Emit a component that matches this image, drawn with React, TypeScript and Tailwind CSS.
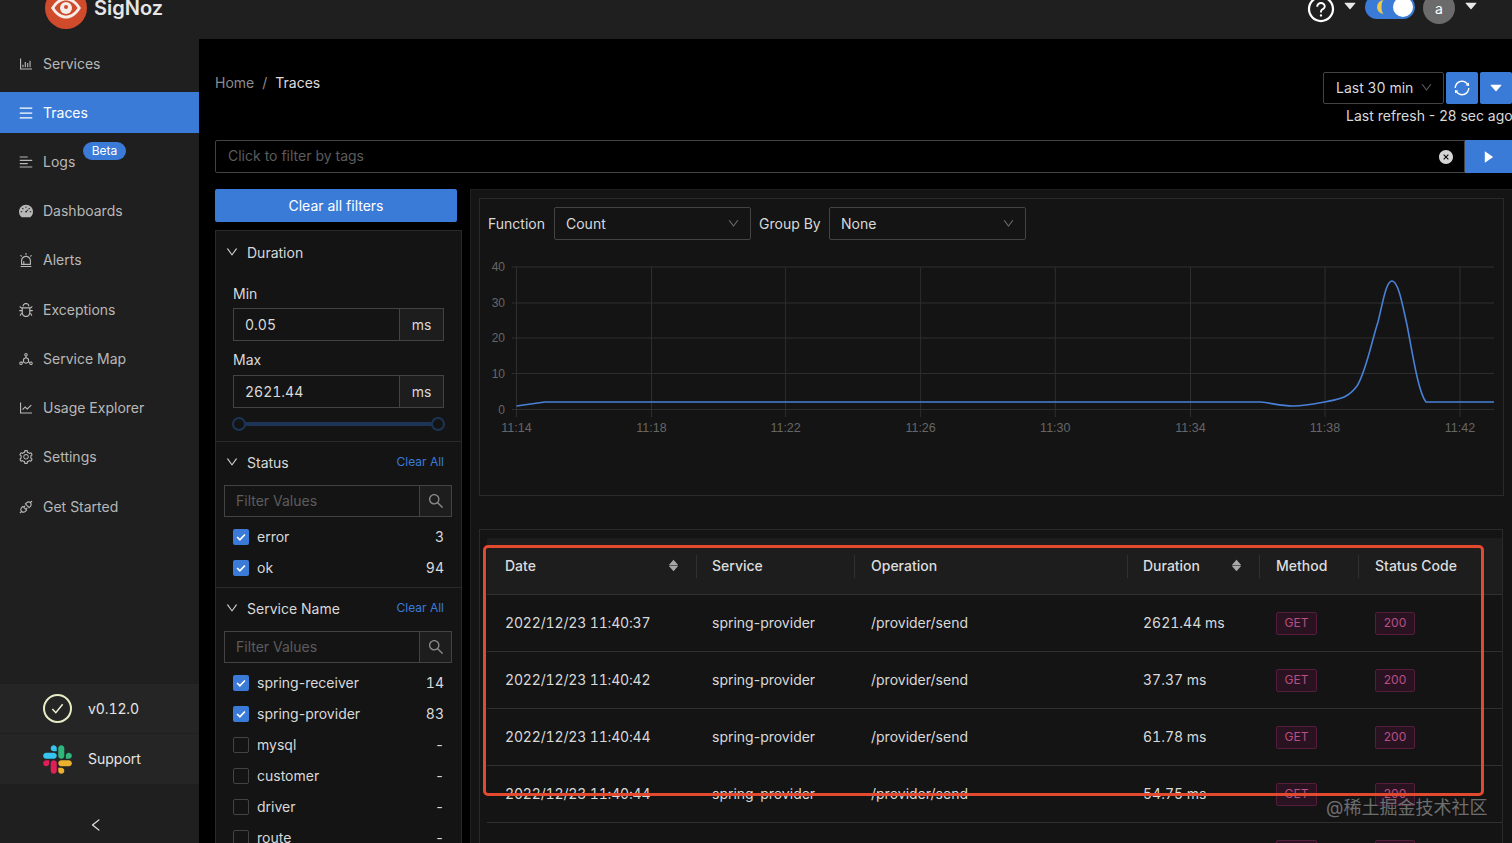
import React from "react";
import {
  AiOutlineBarChart, AiOutlineMenu, AiOutlineAlignLeft, AiFillDashboard, AiOutlineAlert, AiOutlineBug,
  AiOutlineDeploymentUnit, AiOutlineLineChart, AiOutlineSetting, AiOutlineApi, AiOutlineSearch,
  AiFillCloseCircle, AiFillCaretDown, AiFillCaretUp, AiOutlineSync, AiOutlineDown, AiOutlineLeft, AiOutlineQuestionCircle,
} from "react-icons/ai";

const nav = [
  { label: "Services", Icon: AiOutlineBarChart, y: 4 },
  { label: "Traces", Icon: AiOutlineMenu, y: 53, active: true },
  { label: "Logs", Icon: AiOutlineAlignLeft, y: 102 },
  { label: "Dashboards", Icon: AiFillDashboard, y: 151 },
  { label: "Alerts", Icon: AiOutlineAlert, y: 200 },
  { label: "Exceptions", Icon: AiOutlineBug, y: 250 },
  { label: "Service Map", Icon: AiOutlineDeploymentUnit, y: 299 },
  { label: "Usage Explorer", Icon: AiOutlineLineChart, y: 348 },
  { label: "Settings", Icon: AiOutlineSetting, y: 397 },
  { label: "Get Started", Icon: AiOutlineApi, y: 447 },
];

function Slack() {
  return (
    <svg viewBox="0 0 127 127" className="w-[29px] h-[29px]">
      <path d="M27.2 80c0 7.3-5.9 13.2-13.2 13.2C6.7 93.2.8 87.3.8 80c0-7.3 5.9-13.2 13.2-13.2h13.2V80zm6.6 0c0-7.3 5.9-13.2 13.2-13.2 7.3 0 13.2 5.9 13.2 13.2v33c0 7.3-5.9 13.2-13.2 13.2-7.3 0-13.2-5.9-13.2-13.2V80z" fill="#E01E5A" />
      <path d="M47 27c-7.3 0-13.2-5.9-13.2-13.2C33.8 6.5 39.7.6 47 .6c7.3 0 13.2 5.9 13.2 13.2V27H47zm0 6.7c7.3 0 13.2 5.9 13.2 13.2 0 7.3-5.9 13.2-13.2 13.2H13.9C6.6 60.1.7 54.2.7 46.9c0-7.3 5.9-13.2 13.2-13.2H47z" fill="#36C5F0" />
      <path d="M99.9 46.9c0-7.3 5.9-13.2 13.2-13.2 7.3 0 13.2 5.9 13.2 13.2 0 7.3-5.9 13.2-13.2 13.2H99.9V46.9zm-6.6 0c0 7.3-5.9 13.2-13.2 13.2-7.3 0-13.2-5.9-13.2-13.2V13.8C66.9 6.5 72.8.6 80.1.6c7.3 0 13.2 5.9 13.2 13.2v33.1z" fill="#2EB67D" />
      <path d="M80.1 99.8c7.3 0 13.2 5.9 13.2 13.2 0 7.3-5.9 13.2-13.2 13.2-7.3 0-13.2-5.9-13.2-13.2V99.8h13.2zm0-6.6c-7.3 0-13.2-5.9-13.2-13.2 0-7.3 5.9-13.2 13.2-13.2h33.1c7.3 0 13.2 5.9 13.2 13.2 0 7.3-5.9 13.2-13.2 13.2H80.1z" fill="#ECB22E" />
    </svg>
  );
}

function Logo() {
  return (
    <svg viewBox="0 0 42 42" className="w-[42px] h-[42px]">
      <circle cx="21" cy="21" r="21" fill="#cf4b2c" />
      <path d="M6 21 C11 13 16 10.5 21 10.5 C26 10.5 31 13 36 21 C31 29 26 31.5 21 31.5 C16 31.5 11 29 6 21Z" fill="#f6ece8" />
      <path d="M9.5 21 C13 15.5 17 13.5 21 13.5 C25 13.5 29 15.5 32.5 21 C29 26.5 25 28.5 21 28.5 C17 28.5 13 26.5 9.5 21Z" fill="#cf4b2c" />
      <circle cx="21" cy="21" r="6" fill="#f6ece8" />
      <circle cx="21" cy="20" r="2" fill="#cf4b2c" />
    </svg>
  );
}

function Sidebar() {
  return (
    <aside className="absolute left-0 top-[39px] bottom-0 w-[199px] bg-[#1f1f1f]">
      {nav.map(({ label, Icon, y, active }) => (
        <div
          key={label}
          style={{ top: y }}
          className={`absolute left-0 w-[199px] h-[41px] flex items-center pl-[18px] ${active ? "bg-[#3a7bd8] text-white" : "text-[#b8b8b8]"}`}
        >
          <Icon className="w-[16px] h-[16px]" />
          <span className="ml-[9px] text-[14px]">{label}</span>
        </div>
      ))}
      <div className="absolute left-[83px] top-[103px] h-[18px] w-[43px] rounded-full bg-[#3a7bd8] text-white text-[12px] flex items-center justify-center">Beta</div>
      <div className="absolute left-0 top-[645px] w-[199px] h-[50px] bg-[#252525] flex items-center pl-[43px] border-b border-[#1f1f1f]">
        <span className="w-[29px] h-[29px] rounded-full border-2 border-[#e5edc6] flex items-center justify-center">
          <svg viewBox="0 0 16 16" className="w-[15px] h-[15px]" fill="none" stroke="#eef2d8" strokeWidth="1.6"><path d="M2.5 8.5 L6.2 12.5 L13.5 3.5" /></svg>
        </span>
        <span className="ml-[16px] text-[14px] text-[#e6e6e6] tabular-nums tracking-[-0.1px]">v0.12.0</span>
      </div>
      <div className="absolute left-0 top-[695px] w-[199px] h-[50px] bg-[#252525] flex items-center pl-[43px]">
        <Slack />
        <span className="ml-[16px] pb-[2px] text-[14px] text-[#e6e6e6]">Support</span>
      </div>
      <AiOutlineLeft className="absolute left-[88px] top-[778px] w-[16px] h-[16px] text-[#d8d8d8]" />
    </aside>
  );
}

function Header() {
  return (
    <header className="absolute left-0 top-0 w-[1512px] h-[39px] bg-[#1f1f1f] overflow-hidden">
      <div className="absolute left-[45px] top-[-13px]"><Logo /></div>
      <div className="absolute left-[94px] top-[-6px] text-[20px] font-semibold text-[#e6e6e6] leading-[28px]">SigNoz</div>
      <AiOutlineQuestionCircle className="absolute left-[1306px] top-[-6px] w-[30px] h-[30px] text-white" />
      <AiFillCaretDown className="absolute left-[1342px] top-[-2px] w-[16px] h-[16px] text-[#e8e8e8]" />
      <div className="absolute left-[1365px] top-[-5px] w-[50px] h-[24px] rounded-full bg-[#3a7bd8]">
        <svg viewBox="0 0 16 16" className="absolute left-[8px] top-[4px] w-[16px] h-[16px]"><path d="M11 1 A7 7 0 1 0 11 15 A2.5 7 0 0 1 11 1Z" fill="#ecc94b" /></svg>
        <span className="absolute left-[28px] top-[2px] w-[20px] h-[20px] rounded-full bg-white" />
      </div>
      <div className="absolute left-[1423px] top-[-8px] w-[32px] h-[32px] rounded-full bg-[#6b6b6b] flex items-center justify-center text-white text-[14px]">a</div>
      <AiFillCaretDown className="absolute left-[1463px] top-[-2px] w-[16px] h-[16px] text-[#e8e8e8]" />
    </header>
  );
}

function Check({ on }: { on?: boolean }) {
  return (
    <span className={`w-[16px] h-[16px] rounded-[2px] flex items-center justify-center shrink-0 ${on ? "bg-[#3a7bd8]" : "border border-[#434343]"}`}>
      {on && (
        <svg viewBox="0 0 16 16" className="w-[12px] h-[12px]" fill="none" stroke="white" strokeWidth="2.2"><path d="M2.8 8 L6.5 11.8 L13.2 4.6" /></svg>
      )}
    </span>
  );
}

function FilterHead({ title, clear }: { title: string; clear?: boolean }) {
  return (
    <div className="h-[40px] flex items-center pl-[9px] pr-[17px]">
      <AiOutlineDown className="w-[14px] h-[14px] text-[#d0d0d0]" />
      <span className="ml-[8px] text-[14px] text-[#d9d9d9]">{title}</span>
      {clear && <span className="ml-auto text-[12px] text-[#3a7bd8]">Clear All</span>}
    </div>
  );
}

function FilterInput() {
  return (
    <div className="mt-[3px] ml-[8px] w-[228px] h-[32px] flex border border-[#434343]">
      <div className="flex-1 flex items-center pl-[11px] pb-[2px] text-[14px] text-[#5c5c5c]">Filter Values</div>
      <div className="w-[32px] border-l border-[#434343] bg-[#1d1d1d] flex items-center justify-center">
        <AiOutlineSearch className="w-[18px] h-[18px] text-[#8a8a8a]" />
      </div>
    </div>
  );
}

function CheckRow({ label, count, on }: { label: string; count: string; on?: boolean }) {
  return (
    <div className="h-[31px] flex items-center pl-[17px] pr-[17px] text-[14px] text-[#d9d9d9]">
      <Check on={on} />
      <span className="ml-[8px]">{label}</span>
      <span className="ml-auto tabular-nums">{count}</span>
    </div>
  );
}

function MsInput({ value }: { value: string }) {
  return (
    <div className="ml-[17px] w-[211px] h-[33px] flex border border-[#434343]">
      <div className="flex-1 flex items-center pl-[11px] text-[14px] text-[#d9d9d9] tabular-nums">{value}</div>
      <div className="w-[44px] border-l border-[#434343] bg-[#1d1d1d] flex items-center justify-center text-[14px] text-[#d9d9d9]">ms</div>
    </div>
  );
}

function Filters() {
  return (
    <div className="absolute left-[215px] top-[230px] w-[247px] h-[640px] bg-[#141414] border border-[#2a2a2a]">
      <div className="h-[211px] border-b border-[#2a2a2a] relative">
        <div className="h-[42px] flex items-center pl-[9px]">
          <AiOutlineDown className="w-[14px] h-[14px] text-[#d0d0d0]" />
          <span className="ml-[8px] text-[14px] text-[#d9d9d9]">Duration</span>
        </div>
        <div className="mt-[10px] ml-[17px] h-[20px] flex items-center text-[14px] text-[#d9d9d9]">Min</div>
        <div className="mt-[5px]"><MsInput value="0.05" /></div>
        <div className="mt-[8px] ml-[17px] h-[20px] flex items-center text-[14px] text-[#d9d9d9]">Max</div>
        <div className="mt-[6px]"><MsInput value="2621.44" /></div>
        <div className="absolute left-[23px] top-[191px] w-[199px] h-[4px] rounded-full bg-[#1c3456]" />
        <div className="absolute left-[16px] top-[186px] w-[14px] h-[14px] rounded-full border-2 border-[#1c3456] bg-[#141414]" />
        <div className="absolute left-[215px] top-[186px] w-[14px] h-[14px] rounded-full border-2 border-[#1c3456] bg-[#141414]" />
      </div>
      <div className="h-[146px] border-b border-[#2a2a2a]">
        <FilterHead title="Status" clear />
        <FilterInput />
        <div className="mt-[4px]">
          <CheckRow label="error" count="3" on />
          <CheckRow label="ok" count="94" on />
        </div>
      </div>
      <div>
        <FilterHead title="Service Name" clear />
        <FilterInput />
        <div className="mt-[4px]">
          <CheckRow label="spring-receiver" count="14" on />
          <CheckRow label="spring-provider" count="83" on />
          <CheckRow label="mysql" count="-" />
          <CheckRow label="customer" count="-" />
          <CheckRow label="driver" count="-" />
          <CheckRow label="route" count="-" />
        </div>
      </div>
    </div>
  );
}

function Select({ value }: { value: string }) {
  return (
    <div className="w-[197px] h-[33px] border border-[#434343] rounded-[2px] flex items-center pl-[11px] pr-[10px] text-[14px] text-[#d9d9d9]">
      {value}
      <AiOutlineDown className="ml-auto w-[13px] h-[13px] text-[#6a6a6a]" />
    </div>
  );
}

const xTicks: [string, number][] = [["11:14", 516.5], ["11:18", 651.5], ["11:22", 785.6], ["11:26", 920.6], ["11:30", 1055.3], ["11:34", 1190.5], ["11:38", 1325], ["11:42", 1460]];
const yTicks: [string, number][] = [["40", 267], ["30", 303], ["20", 338], ["10", 373.5], ["0", 409.5]];

function Chart() {
  return (
    <svg className="absolute left-[480px] top-[250px]" width="1022" height="190" viewBox="480 250 1022 190" fontFamily="'Liberation Sans', sans-serif">
      {yTicks.map(([l, y]) => (
        <g key={l}>
          <line x1="512" x2="1494" y1={y} y2={y} stroke="#2e2e2e" />
          <text x="505" y={y + 4} textAnchor="end" fontSize="12" fill="#666">{l}</text>
        </g>
      ))}
      {xTicks.map(([l, x]) => (
        <g key={l}>
          <line x1={x} x2={x} y1="267" y2="417" stroke="#2e2e2e" />
          <text x={x} y="431.5" textAnchor="middle" fontSize="12.5" fill="#666">{l}</text>
        </g>
      ))}
      <path
        d="M516.5 406 L545 402 L1260 402 C1272 403 1280 406 1293 406 C1306 406 1314 404 1327 401.5 C1340 399 1348 398 1357 386 C1366 372 1372 340 1378 322 C1383 302 1386 281 1392 281 C1398 281 1402 302 1407 325 C1412 350 1418 392 1426 402 L1494 402"
        fill="none"
        stroke="#4a80d8"
        strokeWidth="1.6"
      />
    </svg>
  );
}

const rows = [
  ["2022/12/23 11:40:37", "spring-provider", "/provider/send", "2621.44 ms"],
  ["2022/12/23 11:40:42", "spring-provider", "/provider/send", "37.37 ms"],
  ["2022/12/23 11:40:44", "spring-provider", "/provider/send", "61.78 ms"],
  ["2022/12/23 11:40:44", "spring-provider", "/provider/send", "54.75 ms"],
];

function Tag({ t, w }: { t: string; w: string }) {
  return (
    <span className={`${w} h-[23px] border border-[#551c3b] bg-[#291321] rounded-[2px] flex items-center justify-center text-[12px] text-[#b84f87]`}>{t}</span>
  );
}

function Sort() {
  return (
    <span className="flex flex-col items-center text-[#a8a8a8] -space-y-[7px]">
      <AiFillCaretUp className="w-[13px] h-[13px]" />
      <AiFillCaretDown className="w-[13px] h-[13px]" />
    </span>
  );
}

function HeadCell({ label, sort, sep, pad }: { label: string; sort?: boolean; sep?: boolean; pad: string }) {
  return (
    <div className={`relative flex items-center ${pad} pr-[16px] pb-[2px] font-medium text-[14px] text-[#dcdcdc]`}>
      {sep && <span className="absolute left-0 top-[17px] h-[23px] w-px bg-[#303030]" />}
      {label}
      {sort && <span className="ml-auto"><Sort /></span>}
    </div>
  );
}

function Table() {
  return (
    <div className="absolute left-[479px] top-[529px] w-[1024px] h-[330px] border border-[#2a2a2a] pl-[7px] pt-[8px]">
      <div className="grid grid-cols-[209px_158px_273px_132px_99px_135px] h-[57px] bg-[#1d1d1d] border-b border-[#303030]">
        <HeadCell label="Date" sort pad="pl-[18px]" />
        <HeadCell label="Service" sep pad="pl-[16px]" />
        <HeadCell label="Operation" sep pad="pl-[17px]" />
        <HeadCell label="Duration" sort sep pad="pl-[16px]" />
        <HeadCell label="Method" sep pad="pl-[17px]" />
        <HeadCell label="Status Code" sep pad="pl-[17px]" />
      </div>
      {[...rows, null].map((r, i) => (
        <div key={i} className="grid grid-cols-[209px_158px_273px_132px_99px_135px] h-[57px] border-b border-[#303030] items-center text-[14px] text-[#d9d9d9]">
          <div className="pl-[18px] pb-[2px] tabular-nums tracking-[-0.16px]">{r?.[0]}</div>
          <div className="pl-[16px] pb-[2px]">{r?.[1]}</div>
          <div className="pl-[17px] pb-[2px]">{r?.[2]}</div>
          <div className="pl-[16px] pb-[2px] tabular-nums">{r?.[3]}</div>
          <div className="pl-[17px]"><Tag t="GET" w="w-[41px]" /></div>
          <div className="pl-[17px]"><Tag t="200" w="w-[40px]" /></div>
        </div>
      ))}
    </div>
  );
}

export default function App() {
  return (
    <div className="relative w-[1512px] h-[843px] overflow-hidden bg-black text-[#d9d9d9]" style={{ fontFamily: "Inter, 'Noto Sans CJK SC', sans-serif" }}>
      <Header />
      <Sidebar />

      <div className="absolute left-[215px] top-[73px] text-[14px] leading-[20px] flex">
        <span className="text-[#8c8c8c]">Home</span>
        <span className="text-[#8c8c8c] mx-[8px]">/</span>
        <span className="text-[#dcdcdc]">Traces</span>
      </div>

      <div className="absolute left-[1323px] top-[72px] w-[121px] h-[32px] border border-[#434343] rounded-[2px] flex items-center pl-[12px] pr-[10px] pb-[2px] text-[14px] text-[#d9d9d9] tabular-nums">
        Last 30 min
        <AiOutlineDown className="ml-auto w-[13px] h-[13px] text-[#5c5c5c]" />
      </div>
      <div className="absolute left-[1446px] top-[72px] w-[32px] h-[32px] bg-[#3a7bd8] rounded-[2px] flex items-center justify-center">
        <AiOutlineSync className="w-[18px] h-[18px] text-white" />
      </div>
      <div className="absolute left-[1480px] top-[72px] w-[32px] h-[32px] bg-[#3a7bd8] rounded-[2px] flex items-center justify-center">
        <AiFillCaretDown className="w-[16px] h-[16px] text-white" />
      </div>
      <div className="absolute left-[1346px] top-[106px] text-[14px] leading-[20px] text-[#d9d9d9] whitespace-nowrap">Last refresh - 28 sec ago</div>

      <div className="absolute left-[215px] top-[140px] w-[1250px] h-[33px] border border-[#434343] rounded-l-[2px] flex items-center pl-[12px] pr-[10px] text-[14px] text-[#5c5c5c]">
        <span className="pb-[2px]">Click to filter by tags</span>
        <AiFillCloseCircle className="ml-auto w-[16px] h-[16px] text-[#d4d4d4]" />
      </div>
      <div className="absolute left-[1465px] top-[140px] w-[47px] h-[33px] bg-[#3a7bd8] flex items-center justify-center">
        <svg viewBox="0 0 12 16" className="w-[10px] h-[14px]"><path d="M1 1 L11 8 L1 15Z" fill="white" /></svg>
      </div>

      <div className="absolute left-[215px] top-[189px] w-[242px] h-[33px] bg-[#3a7bd8] rounded-[2px] flex items-center justify-center text-[14px] text-white">Clear all filters</div>
      <Filters />

      <div className="absolute left-[470px] top-[189px] right-0 bottom-0 bg-[#141414] border-t border-l border-[#1f1f1f]" />
      <div className="absolute left-[479px] top-[198px] w-[1025px] h-[298px] border border-[#2a2a2a]" />
      <div className="absolute left-[488px] top-[207px] h-[33px] flex items-center text-[14px] text-[#d9d9d9]">
        <span className="w-[58px] whitespace-nowrap">Function</span>
        <span className="ml-[8px]"><Select value="Count" /></span>
        <span className="ml-[8px] w-[62px] whitespace-nowrap">Group By</span>
        <span className="ml-[8px]"><Select value="None" /></span>
      </div>
      <Chart />
      <Table />

      <div className="absolute left-[483px] top-[545px] w-[1001px] h-[251px] border-[3px] border-[#e2492f] rounded-[5px] pointer-events-none" />
      <div className="absolute left-[1326px] top-[796px] text-[18px] leading-[24px] text-[#6e6e6e] whitespace-nowrap">@稀土掘金技术社区</div>
    </div>
  );
}
